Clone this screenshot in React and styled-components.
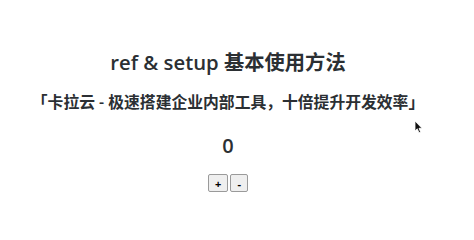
import React, { useState } from 'react';
import styled, { createGlobalStyle } from 'styled-components';

const GlobalStyle = createGlobalStyle`
  html, body {
    margin: 0;
    padding: 0;
    background: #fff;
  }
  body {
    font-family: 'Open Sans', 'Noto Sans CJK SC', sans-serif;
    color: #2b2f33;
    -webkit-font-smoothing: antialiased;
  }
`;

const App = () => {
  const [count, setCount] = useState(0);

  return (
    <Page>
      <GlobalStyle />
      <Title>ref &amp; setup 基本使用方法</Title>
      <Subtitle>「卡拉云 - 极速搭建企业内部工具，十倍提升开发效率」</Subtitle>
      <Count>{count}</Count>
      <Buttons>
        <Btn onClick={() => setCount(count + 1)}>+</Btn>
        <Btn onClick={() => setCount(count - 1)}>-</Btn>
      </Buttons>
      <Cursor width="9" height="14" viewBox="0 0 9 14">
        <path d="M1 1 L1 11 L3.3 8.8 L5 12.8 L6.6 12.1 L5 8.3 L8 8.3 Z" fill="#111" stroke="#fff" strokeWidth="0.8" />
      </Cursor>
    </Page>
  );
};
export default App;

const Page = styled.div`
  position: relative;
  width: 456px;
  height: 217px;
  display: flex;
  flex-direction: column;
  align-items: center;
  padding-top: 49px;
  box-sizing: border-box;
`;

const Title = styled.h1`
  margin: 0;
  font-size: 20.3px;
  font-weight: 600;
  line-height: 26px;
`;

const Subtitle = styled.h2`
  margin: 16px 0 0;
  font-size: 15.8px;
  font-weight: 600;
  line-height: 22px;
`;

const Count = styled.div`
  margin-top: 21px;
  font-size: 20px;
  font-weight: 600;
  line-height: 24px;
`;

const Buttons = styled.div`
  display: flex;
  gap: 2px;
  margin-top: 16px;
`;

const Btn = styled.button`
  height: 18px;
  min-width: 16px;
  padding: 0 6px;
  font-family: 'Open Sans', sans-serif;
  font-size: 11px;
  font-weight: 700;
  line-height: 1;
  color: #000;
  background: #efefef;
  border: 1px solid #9a9a9a;
  border-radius: 2px;
`;

const Cursor = styled.svg`
  position: absolute;
  left: 414px;
  top: 120px;
`;
